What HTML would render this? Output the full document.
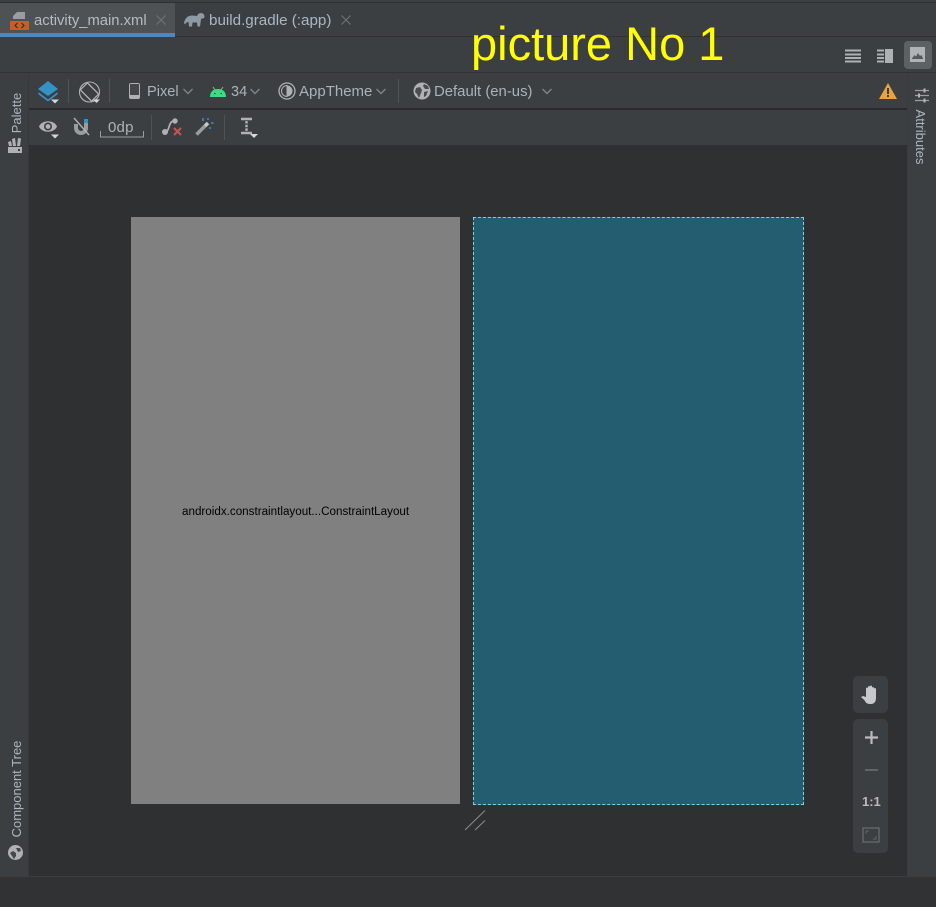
<!DOCTYPE html>
<html>
<head>
<meta charset="utf-8">
<style>
html,body{margin:0;padding:0;width:936px;height:907px;overflow:hidden;background:#3c3f41;font-family:"Liberation Sans",sans-serif;}
.a{position:absolute;}
.t{position:absolute;white-space:nowrap;color:#a7b3bd;font-size:14.5px;line-height:18px;}
svg{position:absolute;overflow:visible;}
</style>
</head>
<body>
<!-- frame bands -->
<div class="a" style="left:0;top:0;width:936px;height:3px;background:#3c3f41;border-bottom:1px solid #2f3031;box-sizing:border-box"></div>
<div class="a" style="left:0;top:3px;width:175px;height:31px;background:#4e5254"></div>
<div class="a" style="left:0;top:33px;width:175px;height:4px;background:#4a88c7"></div>
<div class="a" style="left:175px;top:36px;width:761px;height:1px;background:#323232"></div>
<div class="a" style="left:0;top:72px;width:936px;height:1px;background:#323232"></div>
<div class="a" style="left:29px;top:108px;width:878px;height:2px;background:#2b2b2b"></div>
<div class="a" style="left:29px;top:145px;width:878px;height:1px;background:#2e2f30"></div>
<div class="a" style="left:29px;top:146px;width:878px;height:730px;background:#2f3032"></div>
<div class="a" style="left:28px;top:73px;width:1px;height:803px;background:#37393b"></div>
<div class="a" style="left:907px;top:73px;width:1px;height:803px;background:#393c3e"></div>
<div class="a" style="left:0;top:876px;width:936px;height:31px;background:#303234;border-top:1px solid #3a3c3e;box-sizing:border-box"></div>

<!-- tabs -->
<svg style="left:10px;top:11px" width="20" height="20" viewBox="0 0 20 20">
<path d="M3 8V5l4-4h8v7z" fill="#9a9d9f"/>
<rect x="0" y="10" width="19" height="9" fill="#c75d27"/>
<path d="M7.500 12L5 14.500 7.500 17M11.500 12L14 14.500 11.500 17" fill="none" stroke="#2f2f2f" stroke-width="1.100"/>
</svg>
<div class="t" style="left:34px;top:12px;font-size:14.8px;color:#b3bdc6">activity_main.xml</div>
<svg style="left:156px;top:15px" width="10" height="10"><path d="M.5.500l9 9M9.500.500l-9 9" stroke="#6f7375" stroke-width="1.100"/></svg>
<svg style="left:184px;top:12px" width="21" height="16" viewBox="0 0 21 16">
<path d="M0 11C1 6 4 3.500 8 3.500c2 0 3.500.5 5 .5 .8-2 2-3 4-3 2.500 0 3.500 2 3.500 4 0 1-1 1.500-2.500 1.500-.5 0-.9.500-1.100 1.500L16 14.500h-2.500l-.5-4H8.500l-.5 4H5l-.5-4.500C3 10 1.500 11 1 12.500z" fill="#8d9aa3"/>
</svg>
<div class="t" style="left:209px;top:12px;font-size:15.2px;color:#a9b7c4">build.gradle (:app)</div>
<svg style="left:341px;top:15px" width="10" height="10"><path d="M.5.500l9 9M9.500.500l-9 9" stroke="#6f7375" stroke-width="1.100"/></svg>

<!-- title -->
<div class="a" style="left:471px;top:16px;font-size:47px;line-height:56px;color:#ffff00;white-space:nowrap;font-family:'Liberation Sans',sans-serif;">picture No 1</div>

<!-- view mode buttons -->
<svg style="left:845px;top:49px" width="16" height="14"><path d="M0 1.500h16M0 5.500h16M0 9h16M0 12.500h16" stroke="#aeb1b3" stroke-width="2"/></svg>
<svg style="left:877px;top:49px" width="16" height="14"><path d="M0 1.500h7M0 5.500h7M0 9h7M0 12.500h7" stroke="#aeb1b3" stroke-width="2"/><rect x="8" y="0" width="8" height="14" fill="#aeb1b3"/></svg>
<div class="a" style="left:904px;top:41px;width:28px;height:28px;border-radius:4px;background:#5d6163"></div>
<svg style="left:910px;top:47px" width="15" height="15" viewBox="0 0 15 15"><rect width="15" height="15" fill="#b0b3b5"/><path d="M2 11.500l2.500-3.500 1.500 1.500L8 6l2 3 1.500-1 1.500 3.500z" fill="#55595b"/><rect x="2" y="11" width="11" height="1" fill="#55595b"/></svg>

<!-- left strip -->
<div class="t" style="left:17px;top:113px;font-size:13px;color:#a9b7c4;transform:translate(-50%,-50%) rotate(-90deg);">Palette</div>
<svg style="left:8px;top:137px" width="15" height="16" viewBox="0 0 15 16"><path d="M0 10h14v6H0z" fill="#afb1b3"/><path d="M1 9L0 5l3-1 1 5zM5 9L4 2l3-1 1 8zM9 9l1-8 3 .5-1 7.500z" fill="#afb1b3"/><rect x="10" y="12" width="2" height="2" fill="#3c3f41"/></svg>
<div class="t" style="left:17px;top:789px;font-size:13px;color:#a9b7c4;transform:translate(-50%,-50%) rotate(-90deg);">Component Tree</div>
<svg style="left:8px;top:845px" width="15" height="15" viewBox="0 0 15 15"><circle cx="7.500" cy="7.500" r="7.500" fill="#afb1b3"/><path d="M2 8l3-2 3 2v3l-2 3-2-3zM8 3l4 0 1 3-3 1z" fill="#45484a"/></svg>

<!-- right strip -->
<svg style="left:915px;top:88px" width="14" height="15"><path d="M0 2.500h14M0 7.500h14M0 12.500h14" stroke="#9b9ea0" stroke-width="1.300"/><path d="M9.500 0.500v4M4 5.500v4M9.500 10.500v4" stroke="#b4b6b8" stroke-width="2"/></svg>
<div class="t" style="left:920px;top:137px;font-size:13px;color:#a9b7c4;transform:translate(-50%,-50%) rotate(90deg);">Attributes</div>

<!-- toolbar 1 -->
<svg style="left:38px;top:81px" width="22" height="23" viewBox="0 0 22 23">
<path d="M10 0l10 8-10 7L0 8z" fill="#3592c4"/>
<path d="M1 11.500l9 7 9-7 1 1.500-10 7.500L0 13z" fill="#3592c4"/>
<path d="M13 18.500h8L17 22.500z" fill="#d6d6d6"/>
</svg>
<div class="a" style="left:68px;top:79px;width:1px;height:24px;background:#505355"></div>
<svg style="left:79px;top:81px" width="24" height="24" viewBox="0 0 24 24">
<circle cx="10.500" cy="11" r="10" fill="none" stroke="#afb1b3" stroke-width="1.100"/>
<rect x="5.500" y="3" width="10" height="16" rx="1" transform="rotate(-45 10.500 11)" fill="#3c3f41" stroke="#afb1b3" stroke-width="1.300"/>
<path d="M14 18.500h7L17.500 22z" fill="#d6d6d6"/>
</svg>
<div class="a" style="left:109px;top:79px;width:1px;height:24px;background:#505355"></div>
<svg style="left:129px;top:83px" width="11" height="16"><rect x=".5" y=".5" width="10" height="15" rx="1.500" fill="none" stroke="#afb1b3"/><rect x="1" y="1" width="9" height="11" fill="#45484a"/><rect x="1" y="12" width="9" height="3.500" fill="#afb1b3"/></svg>
<div class="t" style="left:147px;top:83px;font-size:14.6px">Pixel</div>
<svg style="left:183px;top:88px" width="10" height="7"><path d="M.5 1L5 5.500 9.500 1" fill="none" stroke="#7f8487" stroke-width="1.400"/></svg>
<svg style="left:210px;top:85px" width="16" height="12" viewBox="0 0 16 12"><path d="M0 12C0 7 3 4 8 4s8 3 8 8z" fill="#3ddc84"/><path d="M3 2l2 3M13 2l-2 3" stroke="#3ddc84"/><circle cx="4.800" cy="8.500" r=".8" fill="#3c3f41"/><circle cx="11.200" cy="8.500" r=".8" fill="#3c3f41"/></svg>
<div class="t" style="left:231px;top:83px;">34</div>
<svg style="left:250px;top:88px" width="10" height="7"><path d="M.5 1L5 5.500 9.500 1" fill="none" stroke="#7f8487" stroke-width="1.400"/></svg>
<svg style="left:278px;top:82px" width="18" height="18"><circle cx="9" cy="9" r="8" fill="none" stroke="#afb1b3" stroke-width="1.300"/><path d="M9 3.500a5.500 5.500 0 0 0 0 11z" fill="none" stroke="#afb1b3"/><path d="M9 3.500a5.500 5.500 0 0 1 0 11z" fill="#afb1b3"/></svg>
<div class="t" style="left:299px;top:83px;font-size:15px">AppTheme</div>
<svg style="left:376px;top:88px" width="10" height="7"><path d="M.5 1L5 5.500 9.500 1" fill="none" stroke="#7f8487" stroke-width="1.400"/></svg>
<div class="a" style="left:398px;top:79px;width:1px;height:24px;background:#505355"></div>
<svg style="left:413px;top:82px" width="18" height="18" viewBox="0 0 18 18"><circle cx="9" cy="9" r="8.500" fill="#afb1b3"/><path d="M3 6l4-1 2 3-1 3-2 5-2-4-2-2zM11 2l4 2 1 3-4 0-2-3zM11 10l4-1-2 5-2 1z" fill="#4a4d4f"/></svg>
<div class="t" style="left:434px;top:83px;font-size:14.9px">Default (en-us)</div>
<svg style="left:542px;top:88px" width="10" height="7"><path d="M.5 1L5 5.500 9.500 1" fill="none" stroke="#7f8487" stroke-width="1.400"/></svg>
<svg style="left:879px;top:83px" width="18" height="16"><path d="M9 0l9 16H0z" fill="#e8a33d"/><rect x="8" y="5" width="2" height="6" fill="#3c3f41"/><rect x="8" y="12" width="2" height="2" fill="#3c3f41"/></svg>

<!-- toolbar 2 -->
<svg style="left:39px;top:118px" width="21" height="21" viewBox="0 0 21 21"><path d="M0 8.500C3 1.500 15 1.500 18 8.500 15 15.500 3 15.500 0 8.500z" fill="#afb1b3"/><circle cx="9" cy="8.500" r="4" fill="#3c3f41"/><circle cx="9" cy="8.500" r="2.400" fill="#afb1b3"/><path d="M12 16.500h8L16 20.500z" fill="#d6d6d6"/></svg>
<svg style="left:73px;top:118px" width="17" height="18" viewBox="0 0 17 18"><path d="M1 6v4a7 7 0 0 0 14 0V5h-4v5a3 3 0 0 1-6 0V6z" fill="#9a9d9f"/><rect x="11" y="1" width="4" height="4" fill="#3592c4"/><path d="M1 0l15 17" stroke="#afb1b3" stroke-width="1.400"/></svg>
<div class="t" style="left:108px;top:119px;font-size:15px;color:#b0b3b5;letter-spacing:.2px">0dp</div>
<svg style="left:100px;top:130px" width="44" height="8"><path d="M.5 1v6h43V1" fill="none" stroke="#9a9d9f"/></svg>
<div class="a" style="left:151px;top:115px;width:1px;height:25px;background:#505355"></div>
<svg style="left:162px;top:118px" width="21" height="18" viewBox="0 0 21 18"><path d="M3 14c5 0 3-11 9-11" fill="none" stroke="#afb1b3" stroke-width="1.700"/><circle cx="3" cy="14" r="3" fill="#afb1b3"/><circle cx="13" cy="3" r="2.700" fill="#afb1b3"/><path d="M12 10l7 7M19 10l-7 7" stroke="#c75450" stroke-width="2"/></svg>
<svg style="left:195px;top:118px" width="19" height="18" viewBox="0 0 19 18"><path d="M1.500 16.500L10 8" stroke="#9a9d9f" stroke-width="3.500"/><path d="M10 8l3-3" stroke="#c8c8c8" stroke-width="3.500"/><path d="M8 0v3M15 9v2M16 5h2.500M13 0v2" stroke="#3592c4" stroke-width="1.500"/></svg>
<div class="a" style="left:224px;top:115px;width:1px;height:25px;background:#505355"></div>
<svg style="left:241px;top:118px" width="17" height="21" viewBox="0 0 17 21"><path d="M0 1h11M0 15h11" stroke="#afb1b3" stroke-width="2.400"/><path d="M5.500 3v10" stroke="#afb1b3" stroke-width="2.400" stroke-dasharray="2.500 1.200"/><path d="M9 16h8l-4 4z" fill="#d6d6d6"/></svg>

<!-- design surfaces -->
<div class="a" style="left:131px;top:217px;width:329px;height:587px;background:#808080"></div>
<div class="t" style="left:182px;top:504px;font-size:11.65px;line-height:16px;color:#000;">androidx.constraintlayout...ConstraintLayout</div>
<div class="a" style="left:473px;top:217px;width:331px;height:588px;background:#255d70;box-sizing:border-box;border:1px dashed #7fd0e6"></div>
<svg style="left:464px;top:809px" width="24" height="24"><path d="M1 21L21 1.500M11 21L21 11.500" stroke="#8a8c8e" stroke-width="1"/></svg>

<!-- zoom controls -->
<div class="a" style="left:853px;top:676px;width:35px;height:37px;border-radius:5px;background:#3c3f41"></div>
<svg style="left:862px;top:685px" width="18" height="20" viewBox="0 0 18 20"><path d="M1 11l3 1V3.500a1 1 0 0 1 2 0V2a1 1 0 0 1 2 0V1.500a1 1 0 0 1 2 0V3a1 1 0 0 1 2 0V4a1 1 0 0 1 2 0v9c0 4-2 6-5 6-4 0-5-1-6-3-1-1.500-3-3-4-4z" fill="#c6c8c9"/></svg>
<div class="a" style="left:853px;top:719px;width:35px;height:134px;border-radius:5px;background:#3c3f41"></div>
<svg style="left:865px;top:731px" width="13" height="13"><path d="M0 6.500h13M6.500 0v13" stroke="#b8babb" stroke-width="2.200"/></svg>
<svg style="left:865px;top:769px" width="13" height="2"><path d="M0 1h13" stroke="#626567" stroke-width="2"/></svg>
<div class="t" style="left:862px;top:793px;width:18px;text-align:center;font-size:13px;font-weight:bold;color:#b8babb">1:1</div>
<svg style="left:862px;top:827px" width="18" height="16"><rect x="1" y="1" width="16" height="14" fill="none" stroke="#626567" stroke-width="1.500"/><path d="M4 7V4h3M14 9v3h-3" fill="none" stroke="#626567"/></svg>
</body>
</html>
